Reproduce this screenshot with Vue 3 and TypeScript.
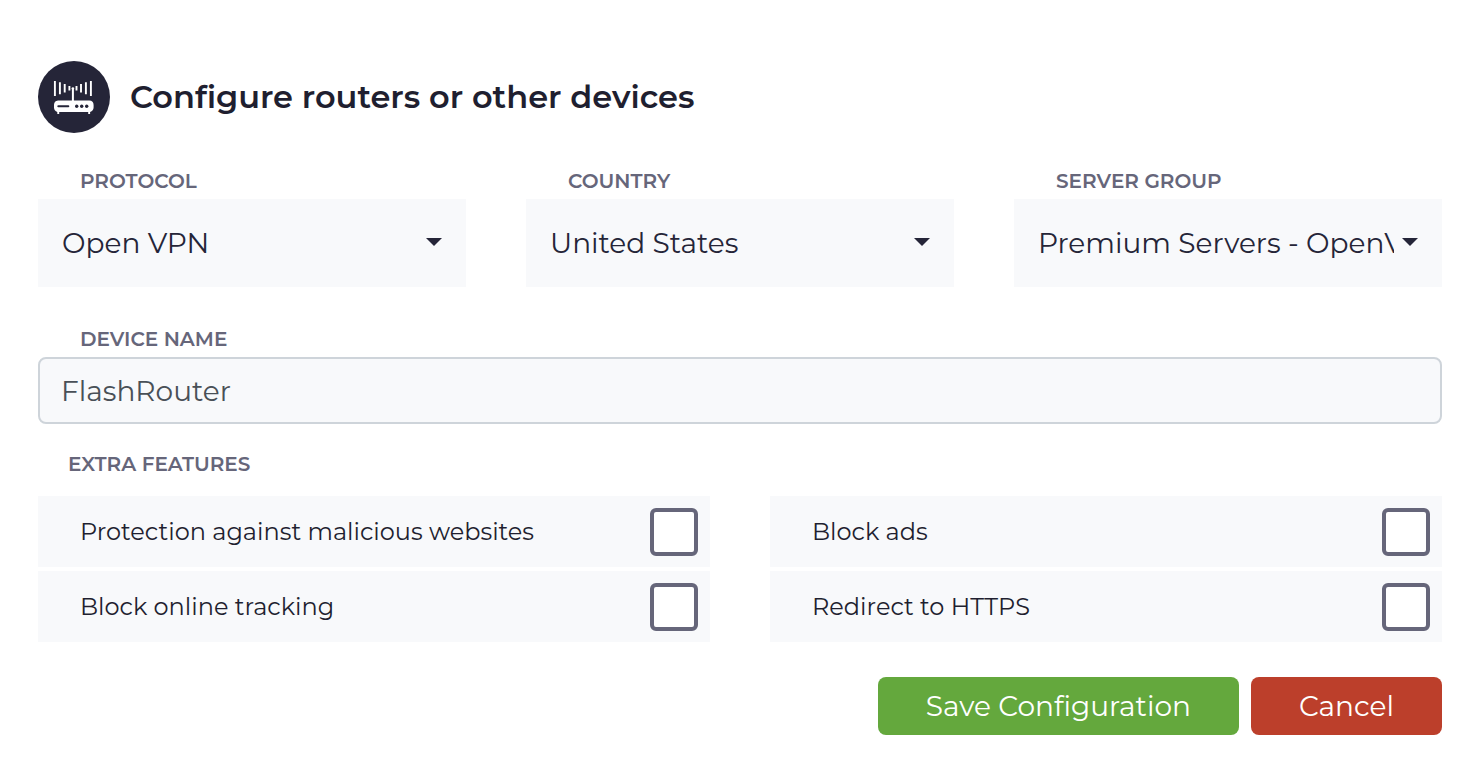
<script setup lang="ts">
import { reactive } from 'vue'

interface SelectField {
  id: string
  label: string
  value: string
  options: string[]
}

interface Feature {
  id: string
  label: string
  enabled: boolean
}

const selects = reactive<SelectField[]>([
  { id: 'protocol', label: 'Protocol', value: 'Open VPN', options: ['Open VPN'] },
  { id: 'country', label: 'Country', value: 'United States', options: ['United States'] },
  {
    id: 'server-group',
    label: 'Server group',
    value: 'Premium Servers - OpenVPN',
    options: ['Premium Servers - OpenVPN'],
  },
])

const device = reactive({ name: 'FlashRouter' })

const features = reactive<Feature[]>([
  { id: 'malicious', label: 'Protection against malicious websites', enabled: false },
  { id: 'ads', label: 'Block ads', enabled: false },
  { id: 'tracking', label: 'Block online tracking', enabled: false },
  { id: 'https', label: 'Redirect to HTTPS', enabled: false },
])
</script>

<template>
  <form class="config" @submit.prevent>
    <header class="header">
      <svg class="badge" viewBox="0 0 72 72" aria-hidden="true">
        <circle cx="36" cy="36" r="36" fill="#252538" />
        <g stroke="#fff" stroke-width="1.9" fill="none">
          <path d="M16.900 20v15M21.900 21.300v12M26.700 23v8.500M31.400 25v4.500M38.500 25v4.500M43 23v8.500M47.900 21.300v12M52.900 20v15" />
          <path d="M34.900 27v14" stroke-width="2" />
        </g>
        <circle cx="34.900" cy="27.500" r="1.300" fill="#fff" />
        <path
          d="M20 39.600h31.300a4.500 4.500 0 0 1 4.300 4.400v2.500a4.700 4.700 0 0 1-3.500 4.400V53h-1.900v-2H21.200v2h-1.900v-2.100A4.700 4.700 0 0 1 16 46.500V44a4.500 4.500 0 0 1 4-4.400z"
          fill="#fff"
        />
        <path d="M20.300 45.300h10" stroke="#252538" stroke-width="2" stroke-linecap="round" />
        <g fill="#252538">
          <circle cx="38.700" cy="45.300" r="1.700" />
          <circle cx="43.700" cy="45.300" r="1.700" />
          <circle cx="48.700" cy="45.300" r="1.700" />
        </g>
      </svg>
      <h1 class="title">Configure routers or other devices</h1>
    </header>

    <div class="selects">
      <div v-for="field in selects" :key="field.id" class="field">
        <label class="caption" :for="field.id">{{ field.label }}</label>
        <div class="select-box">
          <select :id="field.id" v-model="field.value" class="select">
            <option v-for="option in field.options" :key="option">{{ option }}</option>
          </select>
          <svg class="caret" viewBox="0 0 16 8" aria-hidden="true">
            <path d="M0 0h16L8 8z" fill="#252538" />
          </svg>
        </div>
      </div>
    </div>

    <div class="field device">
      <label class="caption" for="device-name">Device name</label>
      <input id="device-name" v-model="device.name" class="text-input" type="text" />
    </div>

    <fieldset class="features">
      <legend class="caption legend">Extra features</legend>
      <div class="feature-grid">
        <label v-for="feature in features" :key="feature.id" class="feature" :for="feature.id">
          <span>{{ feature.label }}</span>
          <input :id="feature.id" v-model="feature.enabled" class="check" type="checkbox" />
        </label>
      </div>
    </fieldset>

    <div class="actions">
      <button class="button save" type="submit">Save Configuration</button>
      <button class="button cancel" type="button">Cancel</button>
    </div>
  </form>
</template>

<style>
body {
  background: #fff;
}
</style>

<style scoped>
.config {
  box-sizing: border-box;
  padding: 61px 22px 33px 38px;
  font-family: Montserrat, Inter, 'Liberation Sans', sans-serif;
  color: #1f1f30;
}

.header {
  display: flex;
  align-items: center;
  gap: 20px;
}

.badge {
  flex: none;
  width: 72px;
  height: 72px;
}

.title {
  margin: 0;
  font-size: 32px;
  line-height: 40px;
  font-weight: 600;
}

.selects {
  display: grid;
  grid-template-columns: repeat(3, minmax(0, 1fr));
  gap: 60px;
  margin-top: 36px;
}

.field {
  display: flex;
  flex-direction: column;
  gap: 6px;
}

.caption {
  padding-left: 42px;
  font-size: 20px;
  line-height: 24px;
  font-weight: 600;
  text-transform: uppercase;
  color: #66667a;
}

.select-box {
  position: relative;
}

.select {
  display: block;
  box-sizing: border-box;
  width: 100%;
  height: 88px;
  padding: 0 48px 0 24px;
  border: 0;
  border-radius: 0;
  appearance: none;
  background: #f8f9fb;
  color: #252538;
  font: inherit;
  font-size: 28px;
  overflow: hidden;
  text-overflow: clip;
}

.caret {
  position: absolute;
  top: 39px;
  right: 24px;
  width: 16px;
  height: 8px;
  pointer-events: none;
}

.device {
  margin-top: 40px;
}

.text-input {
  box-sizing: border-box;
  width: 100%;
  height: 67px;
  padding: 0 21px;
  border: 2px solid #ced4da;
  border-radius: 8px;
  background: #f8f9fb;
  color: #495057;
  font: inherit;
  font-size: 28px;
}

.features {
  min-width: 0;
  margin: 28px 0 0;
  padding: 0;
  border: 0;
}

.legend {
  padding-left: 30px;
}

.feature-grid {
  display: grid;
  grid-template-columns: repeat(2, minmax(0, 1fr));
  gap: 4px 60px;
  margin-top: 20px;
}

.feature {
  display: flex;
  align-items: center;
  justify-content: space-between;
  padding: 12px 12px 11px 42px;
  background: #f8f9fb;
  font-size: 24px;
  line-height: 32px;
}

.check {
  flex: none;
  box-sizing: border-box;
  width: 48px;
  height: 48px;
  margin: 0;
  appearance: none;
  border: 4px solid #66667a;
  border-radius: 6px;
  background: #fff;
}

.check:checked {
  background: #66667a;
}

.actions {
  display: flex;
  justify-content: flex-end;
  gap: 12px;
  margin-top: 35px;
}

.button {
  height: 58px;
  padding: 0 48px;
  border: 0;
  border-radius: 8px;
  color: #fff;
  font: inherit;
  font-size: 28px;
}

.save {
  background: #64a83d;
}

.cancel {
  background: #bc3f2b;
}
</style>
